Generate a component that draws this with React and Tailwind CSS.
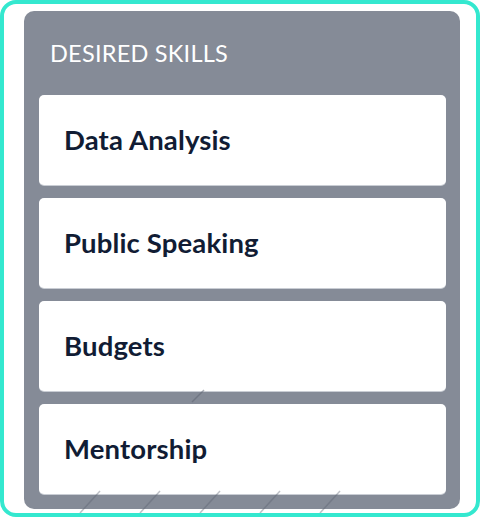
import React from 'react';

const skills = ['Data Analysis', 'Public Speaking', 'Budgets', 'Mentorship'];

const App = () => {
  return (
    <div className="w-[480px] h-[520px] bg-white" style={{ fontFamily: 'Lato, "Open Sans", sans-serif' }}>
      <div className="relative h-[517px] border-[4px] border-[#34e8cf] rounded-[16px] bg-white overflow-hidden">
        <div className="relative ml-[20px] mr-[16px] mt-[7px] bg-[#858b97] rounded-[10px] pl-[15px] pr-[14px] pb-[15px]">
          <h3 className="pt-[30px] pb-[30px] pl-[11px] text-[23.5px] leading-[24px] text-white tracking-[0.01em] uppercase">
            Desired Skills
          </h3>
          <div className="flex flex-col gap-[13px]">
            {skills.map(s => (
              <div
                key={s}
                className="h-[90px] flex items-center bg-white rounded-[5px] pl-[25px] shadow-[0_1px_0_#c9cdd4]"
              >
                <span className="text-[27.5px] font-bold text-[#111c34] tracking-[0.005em]">{s}</span>
              </div>
            ))}
          </div>
        </div>
        {/* faint hatch lines */}
        <svg className="absolute left-0 bottom-0 pointer-events-none" width="472" height="30" viewBox="0 0 472 30">
          {[76, 136, 196, 256, 316].map(x => (
            <line key={x} x1={x} y1="30" x2={x + 20} y2="8" stroke="#5b6270" strokeOpacity="0.4" strokeWidth="1.5" />
          ))}
        </svg>
        <svg className="absolute left-[187px] top-[385px] pointer-events-none" width="14" height="14" viewBox="0 0 14 14">
          <line x1="1" y1="13" x2="13" y2="1" stroke="#5b6270" strokeOpacity="0.5" strokeWidth="1.5" />
        </svg>
      </div>
    </div>
  );
};

export default App;
